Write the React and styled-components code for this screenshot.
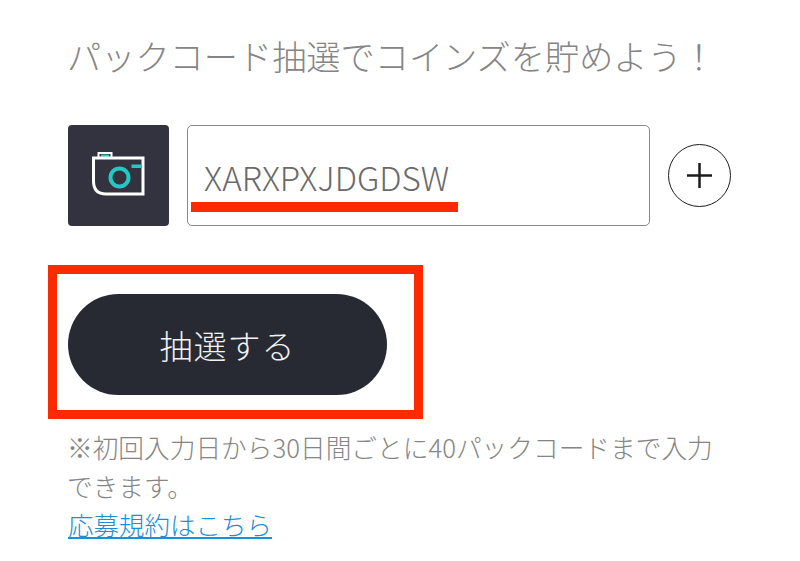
import styled, { createGlobalStyle } from "styled-components";

const GlobalStyle = createGlobalStyle`
  html, body {
    margin: 0;
    padding: 0;
    background: #fff;
  }
  body {
    font-family: "Noto Sans CJK JP", "Liberation Sans", sans-serif;
  }
`;

const Page = styled.div`
  position: relative;
  width: 800px;
  height: 561px;
  padding: 32px 0 0 68px;
  box-sizing: border-box;
  overflow: hidden;
`;

const Title = styled.h1`
  margin: 0 0 0 -1px;
  font-size: 34.2px;
  line-height: 47px;
  font-weight: 300;
  color: #858585;
  white-space: nowrap;
`;

const CodeRow = styled.div`
  display: flex;
  align-items: center;
  gap: 18px;
  margin-top: 46px;
`;

const CameraButton = styled.div`
  display: flex;
  align-items: center;
  justify-content: center;
  width: 101px;
  height: 101px;
  background: #33323f;
  border-radius: 4px;
`;

const CodeBox = styled.div`
  position: relative;
  display: flex;
  align-items: center;
  width: 463px;
  height: 101px;
  padding: 2px 0 0 16px;
  box-sizing: border-box;
  background: #fff;
  border: 1.5px solid #8a8a8a;
  border-radius: 5px;
  font-size: 33.2px;
  font-weight: 300;
  color: #6a6a6a;
`;

const Underline = styled.div`
  position: absolute;
  left: 2.5px;
  top: 75.5px;
  width: 267px;
  height: 10px;
  background: #fb2a00;
`;

const AddButton = styled.div`
  display: flex;
  align-items: center;
  justify-content: center;
  width: 63px;
  height: 63px;
  box-sizing: border-box;
  border: 1.5px solid #1c1c1c;
  border-radius: 50%;
`;

const Submit = styled.div`
  display: flex;
  align-items: center;
  justify-content: center;
  width: 319px;
  height: 101px;
  margin-top: 68px;
  background: #272a33;
  border-radius: 51px;
  color: #f2f2f2;
  font-size: 33px;
  font-weight: 300;
  letter-spacing: 1px;
`;

const Highlight = styled.div`
  position: absolute;
  left: 48px;
  top: 265px;
  width: 375px;
  height: 154px;
  box-sizing: border-box;
  border: 9px solid #fb2a00;
`;

const Note = styled.p`
  width: 660px;
  margin: 33px 0 0 -1px;
  font-size: 25.7px;
  line-height: 38.5px;
  font-weight: 300;
  color: #858585;
`;

const TermsLink = styled.a`
  display: block;
  width: fit-content;
  font-size: 25.5px;
  line-height: 38.5px;
  font-weight: 300;
  color: #1b8fd6;
  text-decoration: underline;
`;

function CameraIcon() {
  return (
    <svg width="56" height="48" viewBox="0 0 56 48" fill="none">
      <rect x="7.5" y="1" width="13" height="5" stroke="#fff" strokeWidth="2" />
      <rect x="10" y="2.5" width="8" height="3" fill="#22c8c4" />
      <path d="M2.5 6 H52 V42 H15 Q2.5 42 2.5 29 Z" stroke="#fff" strokeWidth="3" />
      <circle cx="28.5" cy="25.5" r="9" stroke="#22c8c4" strokeWidth="4" />
      <rect x="40.5" y="12.5" width="10" height="3.5" fill="#22c8c4" />
    </svg>
  );
}

function PlusIcon() {
  return (
    <svg width="25" height="25" viewBox="0 0 25 25" fill="none">
      <path d="M12.5 0 V25 M0 12.5 H25" stroke="#1c1c1c" strokeWidth="2.5" />
    </svg>
  );
}

export default function App() {
  return (
    <>
      <GlobalStyle />
      <Page>
        <Title>パックコード抽選でコインズを貯めよう！</Title>
        <CodeRow>
          <CameraButton>
            <CameraIcon />
          </CameraButton>
          <CodeBox>
            XARXPXJDGDSW
            <Underline />
          </CodeBox>
          <AddButton>
            <PlusIcon />
          </AddButton>
        </CodeRow>
        <Submit>抽選する</Submit>
        <Note>※初回入力日から30日間ごとに40パックコードまで入力できます。</Note>
        <TermsLink href="#">応募規約はこちら</TermsLink>
        <Highlight />
      </Page>
    </>
  );
}
